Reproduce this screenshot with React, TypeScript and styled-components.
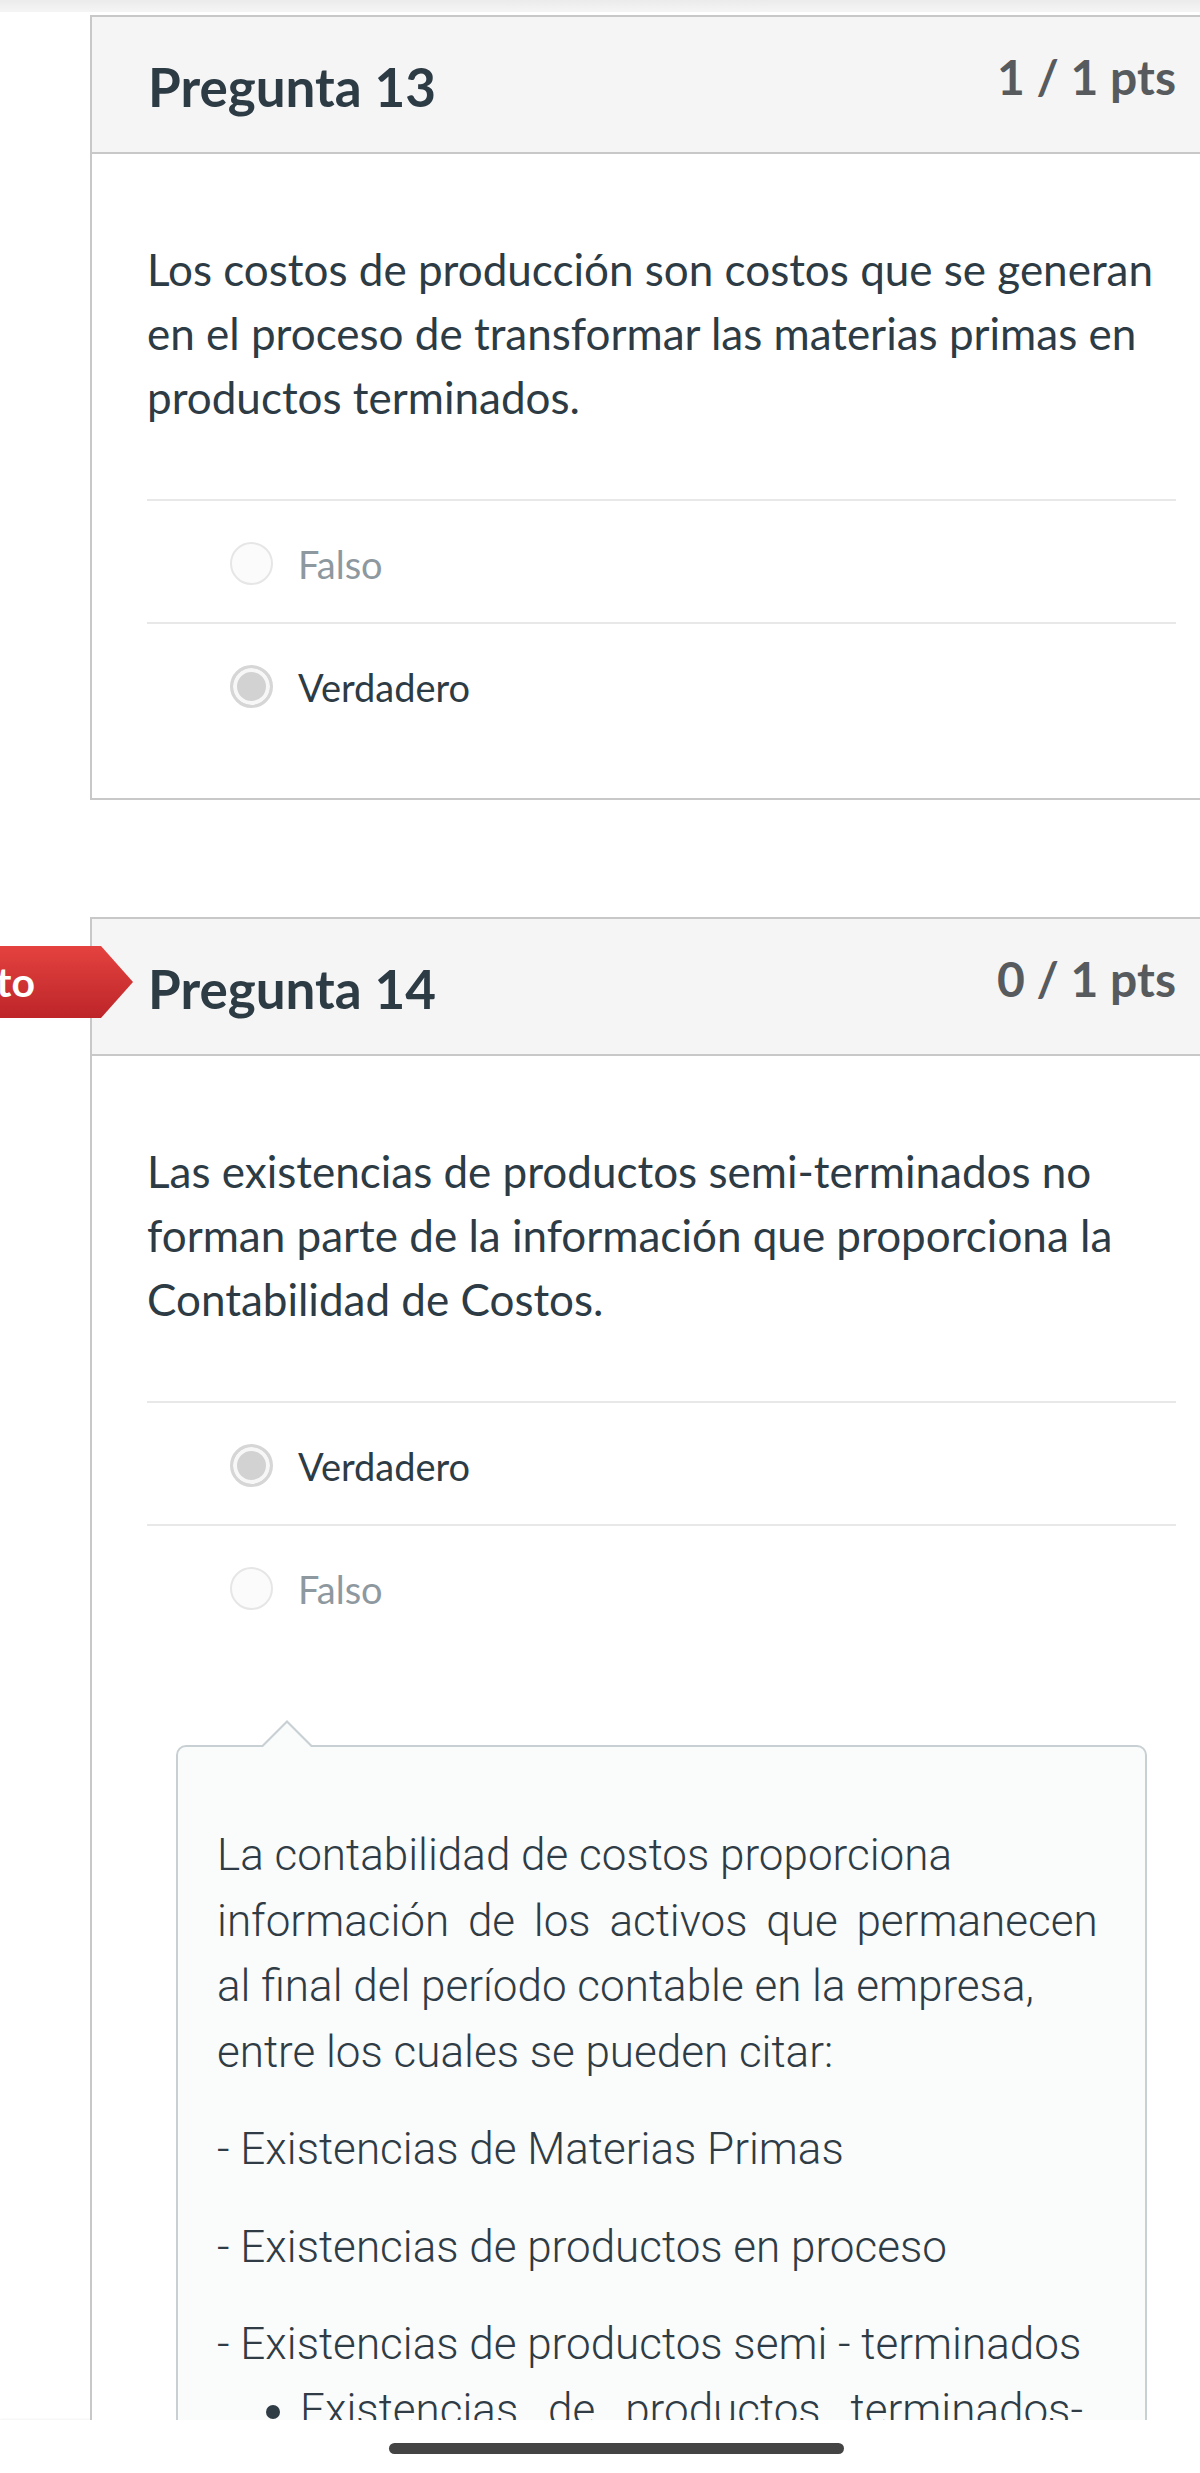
import React from "react";
import styled, { createGlobalStyle } from "styled-components";

const GlobalStyle = createGlobalStyle`
  *, *::before, *::after {
    box-sizing: border-box;
  }
  html, body {
    margin: 0;
    padding: 0;
    background: #fff;
  }
  body {
    font-family: Lato, "Open Sans", sans-serif;
    color: #2d3b45;
  }
`;

const Screen = styled.div`
  height: 2420px;
  overflow: hidden;
`;

const TopShade = styled.div`
  height: 12px;
  background: linear-gradient(#ebebeb, #f5f5f5);
`;

const Card = styled.section<{ $first?: boolean }>`
  position: relative;
  width: 1145px;
  margin-left: 90px;
  margin-top: ${({ $first }) => ($first ? "3px" : "117px")};
  border: 2px solid #c8c8c8;
  background: #fff;
`;

const Header = styled.header`
  display: flex;
  justify-content: space-between;
  align-items: flex-start;
  height: 137px;
  padding: 28px 57px 0 56px;
  background: #f5f5f5;
  border-bottom: 2px solid #c8c8c8;
`;

const Title = styled.h2`
  margin: 10px 0 0;
  font-size: 53px;
  font-weight: 700;
  line-height: 1.2;
  color: #2d3b45;
`;

const Points = styled.div`
  margin-top: 3px;
  font-size: 48px;
  font-weight: 700;
  line-height: 1.2;
  color: #575b5e;
`;

const Flag = styled.div`
  position: absolute;
  top: 27px;
  right: calc(100% - 41px);
  width: 300px;
  height: 72px;
  padding-right: 98px;
  text-align: right;
  font-size: 41px;
  font-weight: 700;
  line-height: 72px;
  color: #fff;
  background: linear-gradient(#e4423f, #bd2529);
  clip-path: polygon(0 0, calc(100% - 32px) 0, 100% 50%, calc(100% - 32px) 100%, 0 100%);
`;

const Body = styled.div<{ $last?: boolean }>`
  padding: 83px 57px ${({ $last }) => ($last ? "200px" : "53px")} 55px;
`;

const QuestionText = styled.p`
  margin: 0 0 70px;
  font-size: 44px;
  line-height: 64px;
  color: #2d3b45;
`;

const AnswerRow = styled.div`
  display: flex;
  align-items: center;
  gap: 25px;
  height: 123px;
  padding: 3px 0 0 83px;
  border-top: 2px solid #e8e8e8;
`;

const Radio = styled.span<{ $checked?: boolean }>`
  flex: none;
  width: 43px;
  height: 43px;
  border-radius: 50%;
  border: ${({ $checked }) => ($checked ? "3px solid #d6d6d6" : "2px solid #e6e6e6")};
  background: ${({ $checked }) => ($checked ? "#d2d2d2" : "#fbfbfb")};
  box-shadow: ${({ $checked }) => ($checked ? "inset 0 0 0 4px #f7f7f7" : "none")};
`;

const AnswerLabel = styled.span<{ $checked?: boolean }>`
  margin-top: 4px;
  font-size: 38px;
  line-height: 1.2;
  color: ${({ $checked }) => ($checked ? "#2d3b45" : "#8e989f")};
`;

const Comment = styled.div`
  position: relative;
  margin: 98px 29px 0;
  padding: 76px 40px 40px 39px;
  border: 2px solid #c9d0d4;
  border-radius: 10px;
  background: #fafbfb;
  font-family: Roboto, "Noto Sans", sans-serif;
  font-size: 44px;
  font-weight: 300;
  line-height: 65.5px;
  color: #2f3c45;

  &::before,
  &::after {
    content: "";
    position: absolute;
    left: 82px;
    width: 0;
    height: 0;
    border-left: 27px solid transparent;
    border-right: 27px solid transparent;
  }
  &::before {
    top: -27px;
    border-bottom: 27px solid #c9d0d4;
  }
  &::after {
    top: -24px;
    left: 84px;
    border-left-width: 25px;
    border-right-width: 25px;
    border-bottom: 25px solid #fafbfb;
  }
`;

const CommentP = styled.p<{ $tight?: boolean }>`
  margin: 0 0 ${({ $tight }) => ($tight ? "0" : "32px")};
`;

const WideLine = styled.span`
  word-spacing: 8px;
`;

const BulletList = styled.ul`
  margin: 0;
  padding: 0 22px 0 83px;
`;

const Bullet = styled.li`
  text-align: justify;
`;

const BottomBar = styled.div`
  display: flex;
  height: 53px;
  padding: 23px 0 0 389px;
  background: #fff;
  box-shadow: 0 -1px 2px rgba(0, 0, 0, 0.05);
`;

const HomePill = styled.div`
  width: 455px;
  height: 11px;
  border-radius: 6px;
  background: #444;
`;

type Answer = { label: string; checked?: boolean };

const Answers = ({ items }: { items: Answer[] }) => (
  <>
    {items.map((a) => (
      <AnswerRow key={a.label}>
        <Radio $checked={a.checked} />
        <AnswerLabel $checked={a.checked}>{a.label}</AnswerLabel>
      </AnswerRow>
    ))}
  </>
);

export default function App() {
  return (
    <>
      <GlobalStyle />
      <Screen>
        <TopShade />
        <Card $first>
          <Header>
            <Title>Pregunta 13</Title>
            <Points>1 / 1 pts</Points>
          </Header>
          <Body>
            <QuestionText>
              Los costos de producción son costos que se generan
              <br />
              en el proceso de transformar las materias primas en
              <br />
              productos terminados.
            </QuestionText>
            <Answers
              items={[{ label: "Falso" }, { label: "Verdadero", checked: true }]}
            />
          </Body>
        </Card>

        <Card>
          <Flag>Incorrecto</Flag>
          <Header>
            <Title>Pregunta 14</Title>
            <Points>0 / 1 pts</Points>
          </Header>
          <Body $last>
            <QuestionText>
              Las existencias de productos semi-terminados no
              <br />
              forman parte de la información que proporciona la
              <br />
              Contabilidad de Costos.
            </QuestionText>
            <Answers
              items={[{ label: "Verdadero", checked: true }, { label: "Falso" }]}
            />
            <Comment>
              <CommentP>
                La contabilidad de costos proporciona
                <br />
                <WideLine>información de los activos que permanecen</WideLine>
                <br />
                al final del período contable en la empresa,
                <br />
                entre los cuales se pueden citar:
              </CommentP>
              <CommentP>- Existencias de Materias Primas</CommentP>
              <CommentP>- Existencias de productos en proceso</CommentP>
              <CommentP $tight>- Existencias de productos semi - terminados</CommentP>
              <BulletList>
                <Bullet>
                  Existencias de productos terminados- disponibles para la venta
                  al cierre del período.
                </Bullet>
              </BulletList>
            </Comment>
          </Body>
        </Card>
      </Screen>
      <BottomBar>
        <HomePill />
      </BottomBar>
    </>
  );
}
